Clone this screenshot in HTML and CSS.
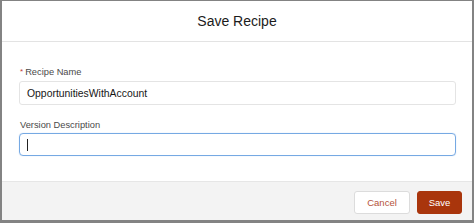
FILE: index.html
```html
<!DOCTYPE html>
<html lang="en">
<head>
  <meta charset="UTF-8">
  <meta name="viewport" content="width=device-width, initial-scale=1.0">
  <title>Save Recipe</title>
  <link rel="stylesheet" href="styles.css">
</head>
<body>
  <div class="modal">
    <div class="modal-header">
      <h2 class="modal-title">Save Recipe</h2>
    </div>

    <div class="modal-body">
      <div class="field">
        <label class="field-label"><abbr class="required">*</abbr>Recipe Name</label>
        <div class="input">OpportunitiesWithAccount</div>
      </div>
      <div class="field">
        <label class="field-label">Version Description</label>
        <div class="input focused"><span class="caret"></span></div>
      </div>
    </div>

    <div class="modal-footer">
      <button class="btn btn-neutral">Cancel</button>
      <button class="btn btn-brand">Save</button>
    </div>
  </div>
</body>
</html>
```

FILE: styles.css
```css
/* Marco gris alrededor del modal */
body {
  margin: 0;
  height: 223px;
  background: #838383;
  font-family: 'Liberation Sans', Arial, sans-serif;
  overflow: hidden;
}

.modal {
  margin: 1px 2px 0 2px;
  height: 219px;
  background: #fff;
  display: flex;
  flex-direction: column;
}

.modal-header {
  height: 40px;
  border-bottom: 1px solid #e3e3e3;
  display: flex;
  align-items: center;
  justify-content: center;
}

.modal-title {
  margin: 0;
  font-size: 14px;
  font-weight: normal;
  color: #1b1b1b;
}

.modal-body {
  flex: 1;
  padding: 24px 16px 0 17px;
  display: flex;
  flex-direction: column;
  gap: 15px;
}

.field-label {
  display: block;
  font-size: 9.3px;
  line-height: 11px;
  color: #4a4a4a;
  margin-bottom: 3px;
  padding-left: 1px;
}

.field + .field .field-label {
  margin-bottom: 2px;
}

.required {
  color: #c23934;
  text-decoration: none;
  border: none;
  font-size: 8px;
  margin-right: 2px;
  vertical-align: 1px;
}

.input {
  height: 22px;
  border: 1px solid #e4e4e4;
  border-radius: 3px;
  padding: 0 7px;
  font-size: 10.4px;
  color: #161616;
  display: flex;
  align-items: center;
}

.input.focused {
  border: 1.5px solid #76a9e3;
  border-radius: 4px;
  height: 21px;
  box-shadow: 0 0 1px #a9c9ef;
}

.caret {
  width: 1px;
  height: 12px;
  background: #222;
}

.modal-footer {
  height: 39px;
  background: #f3f3f3;
  border-top: 1px solid #e6e6e6;
  box-sizing: border-box;
  padding: 9px 10px 0 0;
  display: flex;
  justify-content: flex-end;
  align-items: flex-start;
  gap: 7px;
}

.btn {
  height: 23px;
  border-radius: 3px;
  font-family: 'Liberation Sans', Arial, sans-serif;
  font-size: 9.5px;
  padding: 0;
  cursor: pointer;
}

.btn-neutral {
  width: 56px;
  background: #fff;
  border: 1px solid #dcdcdc;
  color: #b5523a;
}

.btn-brand {
  width: 45px;
  background: #a9350c;
  border: 1px solid #a9350c;
  color: #fff;
}
```
